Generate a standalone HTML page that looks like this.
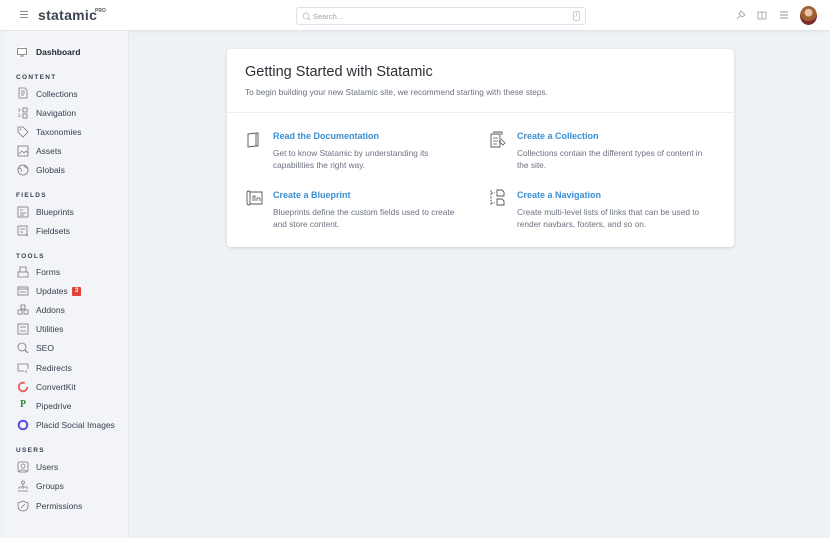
<!DOCTYPE html>
<html><head><meta charset="utf-8"><style>
*{box-sizing:border-box;margin:0;padding:0}
body{width:830px;height:538px;overflow:hidden;background:#eef1f5;font-family:"Liberation Sans",sans-serif;position:relative;color:#1f2937}
.hdr{position:absolute;left:0;top:0;width:830px;height:31px;background:#fff;border-bottom:1px solid #e3e6ea;box-shadow:0 1px 2px rgba(0,0,0,.05)}
.side{position:absolute;left:3px;top:31px;width:126px;height:507px;background:#f2f4f7;border-right:1px solid #e6e9ed}
.it{position:absolute;left:36px;font-size:8.5px;color:#374151;line-height:10px}
.ic{position:absolute;left:17px;width:12px;height:12px}
.sec{position:absolute;left:16px;font-size:6.5px;font-weight:bold;letter-spacing:1.3px;color:#374151}
.card{position:absolute;left:227px;top:49px;width:507px;height:198px;background:#fff;border-radius:4px;box-shadow:0 1px 3px rgba(0,0,0,.12)}
.t{position:absolute;font-size:9px;font-weight:bold;color:#3a8fd4}
.d{position:absolute;font-size:8.3px;color:#6b7280;line-height:12px;width:210px}
</style></head><body>
<div class="hdr">
 <div style="position:absolute;left:20px;top:11px;width:8px;height:1px;background:#888;box-shadow:0 3px 0 #888,0 6px 0 #888"></div>
 <div style="position:absolute;left:38px;top:7px;font-size:14px;font-weight:bold;color:#3d4452;letter-spacing:.3px">statamic</div>
 <div style="position:absolute;left:95px;top:8px;font-size:5px;font-weight:bold;color:#555">PRO</div>
 <div style="position:absolute;left:296px;top:7px;width:290px;height:18px;border:1px solid #dfe2e6;border-radius:3px;background:#fff">
  <svg style="position:absolute;left:5px;top:4px" width="9" height="9" viewBox="0 0 9 9"><circle cx="4" cy="4" r="3" fill="none" stroke="#bbb" stroke-width=".8"/><path d="M6 6l2.5 2.5" stroke="#bbb" stroke-width=".8"/></svg>
  <span style="position:absolute;left:16px;top:4px;font-size:7.5px;color:#9ca3af">Search...</span>
  <span style="position:absolute;right:5px;top:3px;width:7px;height:10px;border:1px solid #ccc;border-radius:2px;font-size:6px;color:#999;text-align:center;line-height:8px">/</span>
 </div>
 <svg style="position:absolute;left:736px;top:10px" width="10" height="10" viewBox="0 0 10 10"><path d="M1 9l3-3M3 4l3 3M5 1l4 4L6 7 3 4z" fill="none" stroke="#999" stroke-width=".8"/></svg>
 <svg style="position:absolute;left:757px;top:10px" width="10" height="10" viewBox="0 0 10 10"><path d="M1 2h3.5l.5 1 .5-1H9v7H1zM5 3v6" fill="none" stroke="#999" stroke-width=".8"/></svg>
 <svg style="position:absolute;left:779px;top:10px" width="10" height="10" viewBox="0 0 10 10"><path d="M1 2h8M1 5h8M1 8h8" stroke="#999" stroke-width=".9"/></svg>
 <div style="position:absolute;left:800px;top:6px;width:17px;height:19px;border-radius:50%;background:radial-gradient(circle at 50% 35%,#e8c2a8 0 25%,#a0602f 27% 55%,#7a2a30 58%);"></div>
</div>
<div class="side"></div>
<svg class="ic" style="top:46px;left:16px" viewBox="0 0 12 12"><circle cx="6" cy="6" r="6" fill="#fff"/><rect x="1.5" y="2.5" width="9" height="6" fill="none" stroke="#777" stroke-width=".8"/><path d="M4 10h4" stroke="#777"/></svg>
<div class="it" style="top:47px;font-weight:bold;color:#1f2937">Dashboard</div>
<div class="sec" style="top:74px">CONTENT</div>
<svg class="ic" style="top:87px" viewBox="0 0 12 12"><path d="M2 1h6l2 2v8H2z" fill="none" stroke="#777" stroke-width=".8"/><path d="M4 4h4M4 6h4M4 8h3" stroke="#777" stroke-width=".7"/></svg>
<div class="it" style="top:89px">Collections</div>
<svg class="ic" style="top:107px" viewBox="0 0 12 12"><path d="M2 1v10M2 3h3M2 9h3" stroke="#888" stroke-width=".8" stroke-dasharray="1.5 1"/><rect x="6" y="1" width="4" height="4" fill="none" stroke="#777" stroke-width=".8"/><rect x="6" y="7" width="4" height="4" fill="none" stroke="#777" stroke-width=".8"/></svg>
<div class="it" style="top:108px">Navigation</div>
<svg class="ic" style="top:126px" viewBox="0 0 12 12"><path d="M1 1h5l5 5-5 5-5-5z" fill="none" stroke="#777" stroke-width=".8"/><circle cx="3.5" cy="3.5" r=".8" fill="#777"/></svg>
<div class="it" style="top:127px">Taxonomies</div>
<svg class="ic" style="top:145px" viewBox="0 0 12 12"><rect x="1" y="1" width="10" height="10" fill="none" stroke="#777" stroke-width=".8"/><path d="M2 9l3-3 2 2 2-2 2 2" fill="none" stroke="#777" stroke-width=".7"/></svg>
<div class="it" style="top:146px">Assets</div>
<svg class="ic" style="top:164px" viewBox="0 0 12 12"><circle cx="6" cy="6" r="5" fill="none" stroke="#777" stroke-width=".8"/><path d="M2 4c2 0 3 2 2 4M7 1c0 2 2 3 4 3" fill="none" stroke="#777" stroke-width=".7"/></svg>
<div class="it" style="top:165px">Globals</div>
<div class="sec" style="top:192px">FIELDS</div>
<svg class="ic" style="top:206px" viewBox="0 0 12 12"><rect x="1" y="1" width="10" height="10" fill="none" stroke="#777" stroke-width=".8"/><path d="M3 4h3M3 7h6M3 9h4" stroke="#777" stroke-width=".7"/></svg>
<div class="it" style="top:207px">Blueprints</div>
<svg class="ic" style="top:225px" viewBox="0 0 12 12"><rect x="1" y="1" width="9" height="9" fill="none" stroke="#777" stroke-width=".8"/><path d="M3 4h5M3 7h3M9 9l2 2" stroke="#777" stroke-width=".7"/></svg>
<div class="it" style="top:226px">Fieldsets</div>
<div class="sec" style="top:253px">TOOLS</div>
<svg class="ic" style="top:266px" viewBox="0 0 12 12"><path d="M3 1h6v5H3zM1 6h10v5H1z" fill="none" stroke="#777" stroke-width=".8"/></svg>
<div class="it" style="top:267px">Forms</div>
<svg class="ic" style="top:285px" viewBox="0 0 12 12"><rect x="1" y="2" width="10" height="8" fill="none" stroke="#777" stroke-width=".8"/><path d="M1 4h10M3 7h6" stroke="#777" stroke-width=".7"/></svg>
<div class="it" style="top:286px">Updates</div>
<div style="position:absolute;left:72px;top:287px;width:9px;height:9px;background:#e0453c;border-radius:1px;color:#fff;font-size:6px;font-weight:bold;text-align:center;line-height:9px">3</div>
<svg class="ic" style="top:304px" viewBox="0 0 12 12"><rect x="4" y="1" width="4" height="4" fill="none" stroke="#777" stroke-width=".8"/><rect x="1" y="6" width="4" height="4" fill="none" stroke="#777" stroke-width=".8"/><rect x="7" y="6" width="4" height="4" fill="none" stroke="#777" stroke-width=".8"/></svg>
<div class="it" style="top:305px">Addons</div>
<svg class="ic" style="top:323px" viewBox="0 0 12 12"><rect x="1" y="1" width="10" height="10" fill="none" stroke="#777" stroke-width=".8"/><path d="M3 4h6M3 8h6" stroke="#777" stroke-width=".7"/></svg>
<div class="it" style="top:324px">Utilities</div>
<svg class="ic" style="top:342px" viewBox="0 0 12 12"><circle cx="5" cy="5" r="4" fill="none" stroke="#777" stroke-width=".8"/><path d="M8 8l3 3" stroke="#777"/></svg>
<div class="it" style="top:343px">SEO</div>
<svg class="ic" style="top:362px" viewBox="0 0 12 12"><path d="M7 9H1V2h10v5" fill="none" stroke="#777" stroke-width=".8"/><path d="M9 8v3" stroke="#777" stroke-width=".8"/></svg>
<div class="it" style="top:363px">Redirects</div>
<svg class="ic" style="top:381px" viewBox="0 0 12 12"><circle cx="6" cy="6" r="4.3" fill="none" stroke="#ec5a5a" stroke-width="1.8" stroke-dasharray="22 5"/></svg>
<div class="it" style="top:382px">ConvertKit</div>
<div style="position:absolute;left:20px;top:399px;font-size:10px;font-weight:bold;color:#2d8a3e;font-family:'Liberation Serif',serif">P</div>
<div class="it" style="top:401px">Pipedrive</div>
<svg class="ic" style="top:419px" viewBox="0 0 12 12"><circle cx="6" cy="6" r="4.3" fill="none" stroke="#5a4ae3" stroke-width="2"/></svg>
<div class="it" style="top:420px">Placid Social Images</div>
<div class="sec" style="top:447px">USERS</div>
<svg class="ic" style="top:461px" viewBox="0 0 12 12"><rect x="1" y="1" width="10" height="10" rx="2" fill="none" stroke="#777" stroke-width=".8"/><circle cx="6" cy="5" r="2" fill="none" stroke="#777" stroke-width=".7"/><path d="M2 11c1-3 7-3 8 0" fill="none" stroke="#777" stroke-width=".7"/></svg>
<div class="it" style="top:462px">Users</div>
<svg class="ic" style="top:480px" viewBox="0 0 12 12"><circle cx="6" cy="2.5" r="1.5" fill="none" stroke="#777" stroke-width=".7"/><path d="M6 4v3M2 7h8M2 7v2M6 7v2M10 7v2M1 11h10" stroke="#777" stroke-width=".7"/></svg>
<div class="it" style="top:481px">Groups</div>
<svg class="ic" style="top:500px" viewBox="0 0 12 12"><path d="M6 1l5 2v3c0 3-2 5-5 5S1 9 1 6V3z" fill="none" stroke="#777" stroke-width=".8"/><path d="M4 8l4-4" stroke="#777" stroke-width=".8"/></svg>
<div class="it" style="top:501px">Permissions</div>

<div class="card">
 <div style="position:absolute;left:18px;top:15px;font-size:14.5px;color:#2b2f36">Getting Started with Statamic</div>
 <div style="position:absolute;left:18px;top:38px;font-size:8.3px;color:#6b7280">To begin building your new Statamic site, we recommend starting with these steps.</div>
 <div style="position:absolute;left:0;top:63px;width:507px;height:1px;background:#eceef1"></div>
 <svg style="position:absolute;left:19px;top:83px" width="14" height="16" viewBox="0 0 14 16"><path d="M2 2l8-1v13l-8 1zM10 1h2v13h-2" fill="none" stroke="#555" stroke-width=".9"/></svg>
 <div class="t" style="left:46px;top:82px">Read the Documentation</div>
 <div class="d" style="left:46px;top:98px">Get to know Statamic by understanding its<br>capabilities the right way.</div>
 <svg style="position:absolute;left:262px;top:82px" width="18" height="18" viewBox="0 0 18 18"><path d="M2 3h9v13H2zM4 1h9v3" fill="none" stroke="#555" stroke-width=".9"/><path d="M4 7h5M4 10h5M4 13h4M12 8l4 4-2 2-4-4" fill="none" stroke="#555" stroke-width=".8"/></svg>
 <div class="t" style="left:290px;top:82px">Create a Collection</div>
 <div class="d" style="left:290px;top:98px;width:215px">Collections contain the different types of content in<br>the site.</div>
 <svg style="position:absolute;left:19px;top:140px" width="18" height="18" viewBox="0 0 18 18"><rect x="1" y="2" width="3" height="14" rx="1.5" fill="none" stroke="#555" stroke-width=".9"/><path d="M4 3h12v12H4" fill="none" stroke="#555" stroke-width=".9"/><path d="M7 12V7h2v5M11 12V9h3v3" fill="none" stroke="#555" stroke-width=".8"/></svg>
 <div class="t" style="left:46px;top:141px">Create a Blueprint</div>
 <div class="d" style="left:46px;top:157px">Blueprints define the custom fields used to create<br>and store content.</div>
 <svg style="position:absolute;left:262px;top:140px" width="18" height="18" viewBox="0 0 18 18"><path d="M2 1v16M2 4h4M2 14h4" stroke="#555" stroke-width=".9" stroke-dasharray="2 1.2"/><path d="M8 1h5l2 2v4H8zM8 10h5l2 2v4H8z" fill="none" stroke="#555" stroke-width=".9"/></svg>
 <div class="t" style="left:290px;top:141px">Create a Navigation</div>
 <div class="d" style="left:290px;top:157px;width:215px">Create multi-level lists of links that can be used to<br>render navbars, footers, and so on.</div>
</div>
</body></html>
